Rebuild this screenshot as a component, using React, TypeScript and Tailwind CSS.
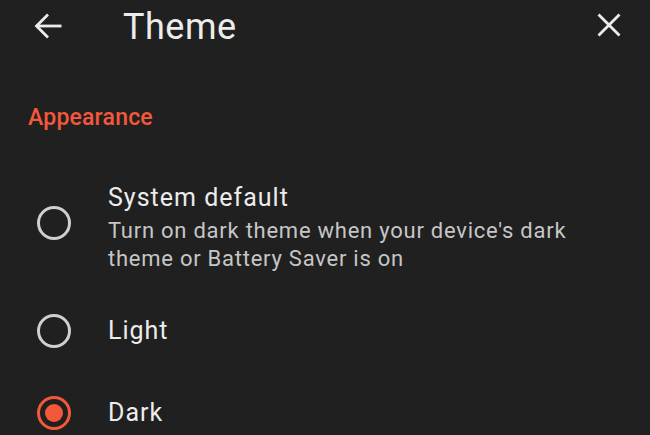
import React from "react";

const ORANGE = "#f4583b";

const BackArrow: React.FC = () => (
  <svg width="28" height="26" viewBox="0 0 28 26" fill="none" stroke="#ececec" strokeWidth="2.8">
    <path d="M14 1.5 L2.5 13 L14 24.5" />
    <path d="M2.5 13 H27.5" />
  </svg>
);

const CloseIcon: React.FC = () => (
  <svg width="24" height="24" viewBox="0 0 24 24" fill="none" stroke="#ececec" strokeWidth="2.8">
    <path d="M1.5 1.5 L22.5 22.5 M22.5 1.5 L1.5 22.5" />
  </svg>
);

const Radio: React.FC<{ checked?: boolean; className?: string }> = ({ checked, className }) =>
  checked ? (
    <div
      className={
        "w-[34px] h-[34px] shrink-0 rounded-full border-[3px] border-[#f4583b] flex items-center justify-center " +
        (className ?? "")
      }
    >
      <div className="w-[18px] h-[18px] rounded-full bg-[#f4583b]" />
    </div>
  ) : (
    <div className={"w-[34px] h-[34px] shrink-0 rounded-full border-[3px] border-[#cfcfcf] " + (className ?? "")} />
  );

const Option: React.FC<{ label: string; desc?: string; checked?: boolean; className?: string }> = ({
  label,
  desc,
  checked,
  className,
}) => (
  <div className={"flex items-center pl-[37px] " + (className ?? "")}>
    <Radio checked={checked} className={desc ? "mb-[10px]" : ""} />
    <div className="ml-[37px]">
      <div className="text-[25px] leading-[30px] tracking-[1px] text-[#ececec]">{label}</div>
      {desc && (
        <div className="mt-[4px] text-[22px] leading-[28px] tracking-[0.75px] text-[#c6c6c6] w-[490px]">
          {desc}
        </div>
      )}
    </div>
  </div>
);

export default function App() {
  return (
    <div
      className="w-[650px] h-[435px] overflow-hidden bg-[#202020]"
      style={{ fontFamily: "Roboto, 'Noto Sans', sans-serif" }}
    >
      <header className="h-[50px] flex items-center">
        <div className="ml-[34px] mt-[1px]">
          <BackArrow />
        </div>
        <h1 className="ml-[61px] text-[36px] leading-[50px] pt-[3px] tracking-[0.5px] text-[#ececec]">
          Theme
        </h1>
        <div className="ml-auto mr-[29px]">
          <CloseIcon />
        </div>
      </header>

      <div
        className="mt-[53px] pl-[28px] text-[23px] leading-[30px] font-medium tracking-[0.2px]"
        style={{ color: ORANGE }}
      >
        Appearance
      </div>

      <Option
        className="mt-[50px]"
        label="System default"
        desc="Turn on dark theme when your device's dark theme or Battery Saver is on"
      />
      <Option className="mt-[41px]" label="Light" />
      <Option className="mt-[48px]" label="Dark" checked />
    </div>
  );
}
